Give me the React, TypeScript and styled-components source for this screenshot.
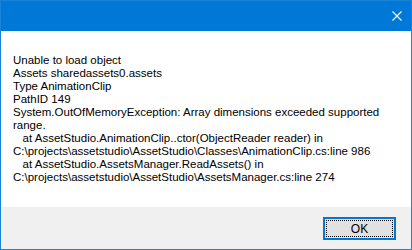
import styled, { createGlobalStyle } from "styled-components";

const lines = [
    "Unable to load object",
    "Assets sharedassets0.assets",
    "Type AnimationClip",
    "PathID 149",
    "System.OutOfMemoryException: Array dimensions exceeded supported",
    "range.",
    "   at AssetStudio.AnimationClip..ctor(ObjectReader reader) in",
    "C:\\projects\\assetstudio\\AssetStudio\\Classes\\AnimationClip.cs:line 986",
    "   at AssetStudio.AssetsManager.ReadAssets() in",
    "C:\\projects\\assetstudio\\AssetStudio\\AssetsManager.cs:line 274",
];

const App = () => {
    return (
        <>
            <GlobalStyle />
            <Window>
                <TitleBar>
                    <CloseButton aria-label="Close">
                        <svg width="10" height="10" viewBox="0 0 10 10">
                            <path d="M0.5 0.5 L9.5 9.5 M9.5 0.5 L0.5 9.5" stroke="#fff" strokeWidth="1.1" />
                        </svg>
                    </CloseButton>
                </TitleBar>
                <Body>
                    <Message>
                        {lines.map((line, i) => (
                            <Line key={i}>{line}</Line>
                        ))}
                    </Message>
                </Body>
                <Footer>
                    <OkButton>OK</OkButton>
                </Footer>
            </Window>
        </>
    );
};

export default App;

const GlobalStyle = createGlobalStyle`
    html, body {
        margin: 0;
        padding: 0;
        background: #ffffff;
    }
`;

const Window = styled.div`
    width: 412px;
    height: 250px;
    box-sizing: border-box;
    border: 1px solid #1883d7;
    display: flex;
    flex-direction: column;
    background: #ffffff;
    font-family: "Liberation Sans", Arial, sans-serif;
    font-size: 11.5px;
    color: #000000;
`;

const TitleBar = styled.div`
    height: 30px;
    background: #0078d7;
    display: flex;
    justify-content: flex-end;
    align-items: flex-start;
`;

const CloseButton = styled.div`
    width: 46px;
    height: 30px;
    display: flex;
    align-items: center;
    justify-content: flex-end;
    padding-right: 9px;
    box-sizing: border-box;
`;

const Body = styled.div`
    flex: 1;
    padding: 23px 0 0 12px;
`;

const Message = styled.div`
    display: flex;
    flex-direction: column;
`;

const Line = styled.div`
    white-space: pre;
    line-height: 13px;
    height: 13px;
`;

const Footer = styled.div`
    height: 42px;
    background: #f0f0f0;
    display: flex;
    justify-content: flex-end;
    align-items: flex-start;
    padding: 10px 15px 0 0;
    box-sizing: border-box;
`;

const OkButton = styled.div`
    width: 73px;
    height: 23px;
    box-sizing: border-box;
    border: 2px solid #0078d7;
    background: #e1e1e1;
    position: relative;
    display: flex;
    align-items: center;
    justify-content: center;
    font-size: 12px;
    color: #000000;

    &::after {
        content: "";
        position: absolute;
        inset: 1px;
        border: 1px dotted #000000;
    }
`;
